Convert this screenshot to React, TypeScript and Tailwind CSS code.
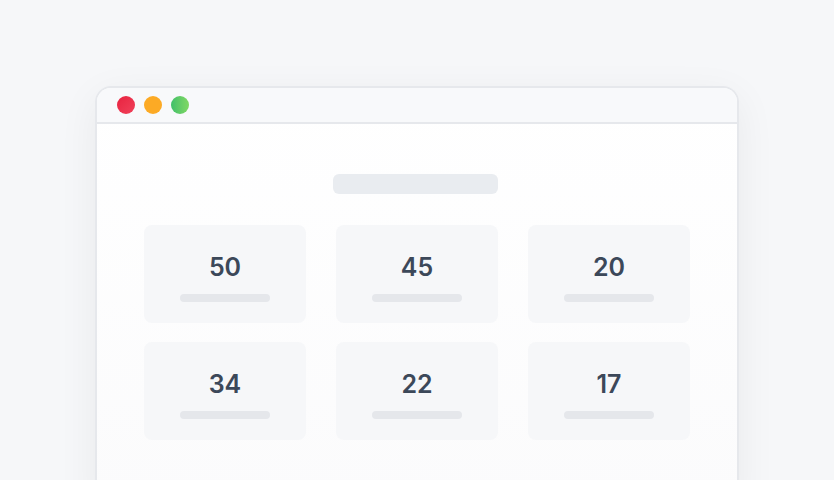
import React from "react";

const stats = [50, 45, 20, 34, 22, 17];

export default function App() {
  return (
    <div
      className="h-[480px] w-[834px] overflow-hidden bg-[#f6f7f9] pt-[86px]"
      style={{ fontFamily: "Inter, 'Noto Sans', sans-serif" }}
    >
      <div className="ml-[95px] h-[420px] w-[644px] rounded-t-[16px] border-2 border-b-0 border-[#e6e8ec] bg-gradient-to-b from-white to-[#fbfbfc] shadow-[0_10px_40px_rgba(15,23,42,0.06)]">
        <div className="flex h-[36px] items-center gap-[9px] rounded-t-[14px] border-b-2 border-[#e6e8ec] bg-[#f8f9fb] pl-[20px]">
          <span className="h-[18px] w-[18px] rounded-full bg-gradient-to-br from-[#e8203f] to-[#f0405a]" />
          <span className="h-[18px] w-[18px] rounded-full bg-[#fcaa25]" />
          <span className="h-[18px] w-[18px] rounded-full bg-gradient-to-r from-[#3fc06a] to-[#7fd863]" />
        </div>
        <div className="flex flex-col items-center pt-[50px]">
          <div className="mr-[4px] h-[20px] w-[165px] rounded-[6px] bg-[#e9ecf0]" />
          <div className="mt-[31px] grid grid-cols-3 gap-x-[30px] gap-y-[19px]">
            {stats.map((n) => (
              <div
                key={n}
                className="flex h-[98px] w-[162px] flex-col items-center rounded-[8px] bg-[#f6f7f9] pt-[27px]"
              >
                <span className="text-[25px] font-semibold leading-[30px] text-[#3c4859]">{n}</span>
                <span className="mt-[12px] h-[8px] w-[90px] rounded-full bg-[#e5e7eb]" />
              </div>
            ))}
          </div>
        </div>
      </div>
    </div>
  );
}
